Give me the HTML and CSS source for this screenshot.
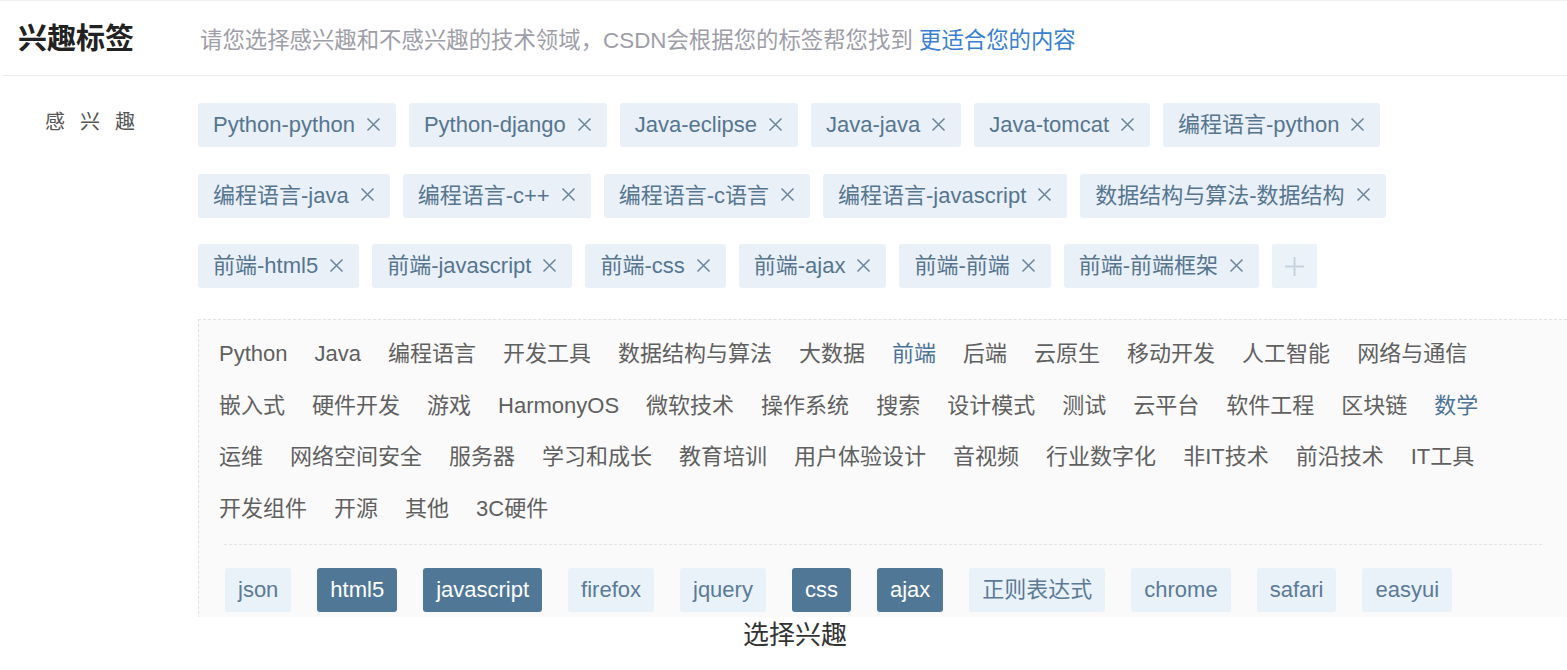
FILE: index.html
```html
<!DOCTYPE html>
<html lang="zh-CN">
<head>
<meta charset="utf-8">
<title>兴趣标签</title>
<link rel="stylesheet" href="styles.css">
</head>
<body>
<div class="shot">
  <div class="header">
    <div class="title">兴趣标签</div>
    <div class="desc">请您选择感兴趣和不感兴趣的技术领域，CSDN会根据您的标签帮您找到 <span class="link">更适合您的内容</span></div>
  </div>
  <div class="row">
    <div class="label">感兴趣</div>
    <div class="content">
      <div class="tags">
        <span class="tag">Python-python<svg class="x" viewBox="0 0 15 15"><path d="M1.5 1.5L13.5 13.5M13.5 1.5L1.5 13.5"/></svg></span>
        <span class="tag">Python-django<svg class="x" viewBox="0 0 15 15"><path d="M1.5 1.5L13.5 13.5M13.5 1.5L1.5 13.5"/></svg></span>
        <span class="tag">Java-eclipse<svg class="x" viewBox="0 0 15 15"><path d="M1.5 1.5L13.5 13.5M13.5 1.5L1.5 13.5"/></svg></span>
        <span class="tag">Java-java<svg class="x" viewBox="0 0 15 15"><path d="M1.5 1.5L13.5 13.5M13.5 1.5L1.5 13.5"/></svg></span>
        <span class="tag">Java-tomcat<svg class="x" viewBox="0 0 15 15"><path d="M1.5 1.5L13.5 13.5M13.5 1.5L1.5 13.5"/></svg></span>
        <span class="tag">编程语言-python<svg class="x" viewBox="0 0 15 15"><path d="M1.5 1.5L13.5 13.5M13.5 1.5L1.5 13.5"/></svg></span>
        <span class="tag">编程语言-java<svg class="x" viewBox="0 0 15 15"><path d="M1.5 1.5L13.5 13.5M13.5 1.5L1.5 13.5"/></svg></span>
        <span class="tag">编程语言-c++<svg class="x" viewBox="0 0 15 15"><path d="M1.5 1.5L13.5 13.5M13.5 1.5L1.5 13.5"/></svg></span>
        <span class="tag">编程语言-c语言<svg class="x" viewBox="0 0 15 15"><path d="M1.5 1.5L13.5 13.5M13.5 1.5L1.5 13.5"/></svg></span>
        <span class="tag">编程语言-javascript<svg class="x" viewBox="0 0 15 15"><path d="M1.5 1.5L13.5 13.5M13.5 1.5L1.5 13.5"/></svg></span>
        <span class="tag">数据结构与算法-数据结构<svg class="x" viewBox="0 0 15 15"><path d="M1.5 1.5L13.5 13.5M13.5 1.5L1.5 13.5"/></svg></span>
        <span class="tag">前端-html5<svg class="x" viewBox="0 0 15 15"><path d="M1.5 1.5L13.5 13.5M13.5 1.5L1.5 13.5"/></svg></span>
        <span class="tag">前端-javascript<svg class="x" viewBox="0 0 15 15"><path d="M1.5 1.5L13.5 13.5M13.5 1.5L1.5 13.5"/></svg></span>
        <span class="tag">前端-css<svg class="x" viewBox="0 0 15 15"><path d="M1.5 1.5L13.5 13.5M13.5 1.5L1.5 13.5"/></svg></span>
        <span class="tag">前端-ajax<svg class="x" viewBox="0 0 15 15"><path d="M1.5 1.5L13.5 13.5M13.5 1.5L1.5 13.5"/></svg></span>
        <span class="tag">前端-前端<svg class="x" viewBox="0 0 15 15"><path d="M1.5 1.5L13.5 13.5M13.5 1.5L1.5 13.5"/></svg></span>
        <span class="tag">前端-前端框架<svg class="x" viewBox="0 0 15 15"><path d="M1.5 1.5L13.5 13.5M13.5 1.5L1.5 13.5"/></svg></span>
        <span class="add"><svg class="plus" viewBox="0 0 19 19"><path d="M9.5 0V19M0 9.5H19"/></svg></span>
      </div>
      <div class="panel">
        <div class="cats">
          <span class="cat">Python</span><span class="cat">Java</span><span class="cat">编程语言</span><span class="cat">开发工具</span><span class="cat">数据结构与算法</span><span class="cat">大数据</span><span class="cat active">前端</span><span class="cat">后端</span><span class="cat">云原生</span><span class="cat">移动开发</span><span class="cat">人工智能</span><span class="cat">网络与通信</span>
          <span class="cat">嵌入式</span><span class="cat">硬件开发</span><span class="cat">游戏</span><span class="cat">HarmonyOS</span><span class="cat">微软技术</span><span class="cat">操作系统</span><span class="cat">搜索</span><span class="cat">设计模式</span><span class="cat">测试</span><span class="cat">云平台</span><span class="cat">软件工程</span><span class="cat">区块链</span><span class="cat active">数学</span>
          <span class="cat">运维</span><span class="cat">网络空间安全</span><span class="cat">服务器</span><span class="cat">学习和成长</span><span class="cat">教育培训</span><span class="cat">用户体验设计</span><span class="cat">音视频</span><span class="cat">行业数字化</span><span class="cat">非IT技术</span><span class="cat">前沿技术</span><span class="cat">IT工具</span>
          <span class="cat">开发组件</span><span class="cat">开源</span><span class="cat">其他</span><span class="cat">3C硬件</span>
        </div>
        <div class="sep"></div>
        <div class="subs">
          <span class="sub">json</span>
          <span class="sub on">html5</span>
          <span class="sub on">javascript</span>
          <span class="sub">firefox</span>
          <span class="sub">jquery</span>
          <span class="sub on">css</span>
          <span class="sub on">ajax</span>
          <span class="sub">正则表达式</span>
          <span class="sub">chrome</span>
          <span class="sub">safari</span>
          <span class="sub">easyui</span>
        </div>
      </div>
    </div>
  </div>
</div>
<div class="caption">选择兴趣</div>
</body>
</html>
```

FILE: styles.css
```css
html, body {
  margin: 0;
  padding: 0;
  background: #fff;
}
body {
  width: 1567px;
  height: 670px;
  overflow: hidden;
  font-family: "Liberation Sans", "Noto Sans CJK SC", sans-serif;
}
.shot {
  height: 617px;
  border-top: 1px solid #f0f0f0;
  box-sizing: border-box;
  overflow: hidden;
}
.header {
  height: 75px;
  margin-left: 3px;
  padding: 6px 0 0 15px;
  border-bottom: 1px solid #ececec;
  display: flex;
  align-items: center;
  box-sizing: border-box;
}
.title {
  width: 182px;
  font-size: 29px;
  font-weight: bold;
  color: #222;
  line-height: 30px;
  margin-top: -4px;
}
.desc {
  font-size: 22.4px;
  color: #9e9ea8;
  line-height: 26px;
}
.link {
  color: #3a7fd0;
}
.row {
  display: flex;
}
.label {
  width: 198px;
  flex: none;
  box-sizing: border-box;
  padding: 27px 0 0 45px;
  font-size: 20px;
  line-height: 38px;
  letter-spacing: 15px;
  color: #555;
}
.content {
  flex: 1;
  min-width: 0;
}
.tags {
  width: 1332px;
  padding-top: 27px;
  display: flex;
  flex-wrap: wrap;
  gap: 26.5px 13px;
}
.tag {
  height: 44px;
  padding: 0 15px;
  display: inline-flex;
  align-items: center;
  background: #e9f0f7;
  color: #56758f;
  font-size: 22px;
  line-height: 24px;
  border-radius: 3px;
  box-sizing: border-box;
  white-space: nowrap;
}
.x {
  width: 15px;
  height: 15px;
  margin-left: 11px;
  margin-top: -2px;
  fill: none;
  stroke: #6a859c;
  stroke-width: 1.5;
}
.add {
  width: 45px;
  height: 44px;
  display: inline-flex;
  align-items: center;
  justify-content: center;
  background: #ebf2f8;
  border-radius: 2px;
}
.plus {
  width: 19px;
  height: 19px;
  fill: none;
  stroke: #c6d3df;
  stroke-width: 2;
}
.panel {
  margin-top: 31px;
  border-top: 1px dashed #e2e2e2;
  border-left: 1px dashed #e2e2e2;
  background: #fafafa;
  height: 300px;
  box-sizing: border-box;
}
.cats {
  padding: 8px 37px 0 20px;
  display: flex;
  flex-wrap: wrap;
  column-gap: 27px;
  font-size: 22px;
  line-height: 51.5px;
  color: #606060;
}
.cat.active {
  color: #4d7396;
}
.sep {
  margin: 10px 25px 0 25px;
  border-top: 1px dashed #e4e4e4;
}
.subs {
  margin-top: 23px;
  padding-left: 26px;
  display: flex;
  gap: 26px;
}
.sub {
  height: 44px;
  padding: 0 13px;
  display: inline-flex;
  align-items: center;
  background: #e9f1f9;
  color: #5b7a97;
  font-size: 22px;
  line-height: 24px;
  border-radius: 3px;
  white-space: nowrap;
}
.sub.on {
  background: #517797;
  color: #fff;
}
.caption {
  text-align: center;
  padding-left: 23px;
  font-size: 26px;
  line-height: 36px;
  color: #333;
}
```
